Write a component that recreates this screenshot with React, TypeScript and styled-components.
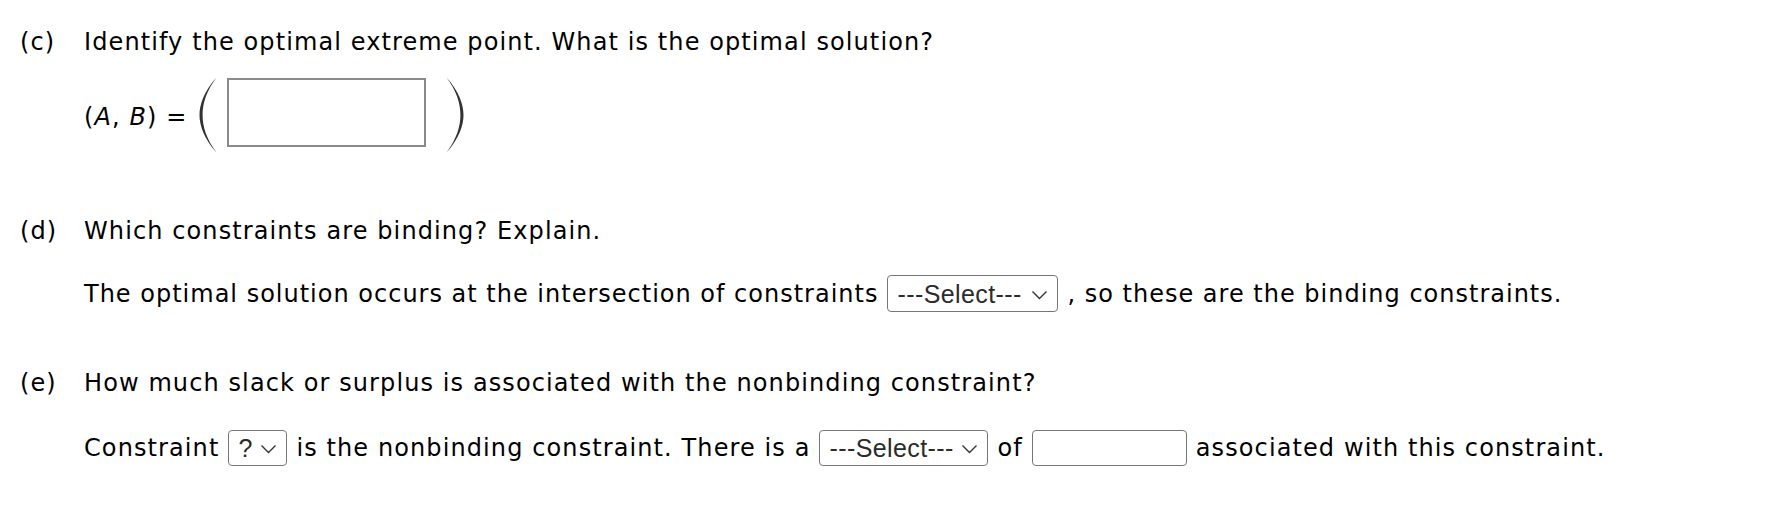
import React from 'react';
import styled, { createGlobalStyle } from 'styled-components';

const GlobalStyle = createGlobalStyle`
    html, body {
        margin: 0;
        padding: 0;
        background: #fff;
    }
    body {
        font-family: Verdana, "DejaVu Sans", sans-serif;
        font-size: 24px;
        letter-spacing: 1.1px;
        color: #000;
    }
`;

const Page = styled.div`
    padding: 27px 0 0 20px;
    display: flex;
    flex-direction: column;
`;

const Part = styled.div<{ $gap: number }>`
    display: flex;
    margin-top: ${(p) => p.$gap}px;
`;

const PartLabel = styled.div`
    width: 64px;
    flex-shrink: 0;
    line-height: 30px;
`;

const PartBody = styled.div`
    display: flex;
    flex-direction: column;
`;

const Question = styled.div`
    line-height: 30px;
    white-space: nowrap;
`;

const AnswerRow = styled.div<{ $gap: number; $spacing?: number }>`
    display: flex;
    align-items: center;
    gap: 9px;
    margin-top: ${(p) => p.$gap}px;
    white-space: nowrap;
    letter-spacing: ${(p) => p.$spacing ?? 1.1}px;
`;

const MathRow = styled.div`
    display: flex;
    align-items: center;
    margin-top: 20px;
    white-space: nowrap;
`;

const MathLabel = styled.span`
    margin-top: 4px;
    i {
        font-style: italic;
    }
`;

const Paren = styled.svg<{ $left: number }>`
    width: 18px;
    height: 76px;
    margin-left: ${(p) => p.$left}px;
    flex-shrink: 0;
`;

const BigInput = styled.input`
    box-sizing: border-box;
    width: 199px;
    height: 69px;
    margin-left: 10px;
    margin-top: -5px;
    border: 2px solid #8a8a8a;
    border-radius: 0;
    background: #fff;
    padding: 0 8px;
    font: inherit;
`;

const SmallInput = styled.input`
    box-sizing: border-box;
    width: 155px;
    height: 36px;
    border: 1px solid #767676;
    border-radius: 4px;
    background: #fff;
    padding: 0 8px;
    font: inherit;
`;

const SelectWrap = styled.span<{ $width: number; $height: number }>`
    position: relative;
    display: inline-flex;
    width: ${(p) => p.$width}px;
    height: ${(p) => p.$height}px;
    flex-shrink: 0;
`;

const NativeSelect = styled.select`
    appearance: none;
    -webkit-appearance: none;
    box-sizing: border-box;
    width: 100%;
    height: 100%;
    margin: 0;
    border: 1px solid #767676;
    border-radius: 4px;
    background: #fff;
    padding: 0 0 0 9px;
    font-family: "Liberation Sans", Arial, sans-serif;
    font-size: 25px;
    letter-spacing: 0.4px;
    color: #2b2b2b;
`;

const Chevron = styled.svg`
    position: absolute;
    right: 10px;
    top: 50%;
    width: 17px;
    height: 10px;
    margin-top: -4px;
    pointer-events: none;
`;

const Dropdown: React.FC<{ width: number; height: number; label: string }> = ({ width, height, label }) => (
    <SelectWrap $width={width} $height={height}>
        <NativeSelect defaultValue="">
            <option value="">{label}</option>
        </NativeSelect>
        <Chevron viewBox="0 0 17 10">
            <path d="M1.5 1.5 L8.5 8.5 L15.5 1.5" fill="none" stroke="#333" strokeWidth="1.4" />
        </Chevron>
    </SelectWrap>
);

const LeftParen = () => (
    <Paren $left={12} viewBox="0 0 18 76">
        <path d="M17.5 0.5 C5 14, 0.5 28, 0.5 38 C0.5 48, 5 62, 17.5 75.5 C7.5 62, 3.6 50, 3.6 38 C3.6 26, 7.5 14, 17.5 0.5 Z" fill="#333" />
    </Paren>
);

const RightParen = () => (
    <Paren $left={20} viewBox="0 0 18 76">
        <path d="M0.5 0.5 C13 14, 17.5 28, 17.5 38 C17.5 48, 13 62, 0.5 75.5 C10.5 62, 14.4 50, 14.4 38 C14.4 26, 10.5 14, 0.5 0.5 Z" fill="#333" />
    </Paren>
);

export default function App() {
    return (
        <>
            <GlobalStyle />
            <Page>
                <Part $gap={0}>
                    <PartLabel>(c)</PartLabel>
                    <PartBody>
                        <Question>Identify the optimal extreme point. What is the optimal solution?</Question>
                        <MathRow>
                            <MathLabel>
                                (<i>A</i>, <i>B</i>) =
                            </MathLabel>
                            <LeftParen />
                            <BigInput type="text" />
                            <RightParen />
                        </MathRow>
                    </PartBody>
                </Part>

                <Part $gap={63}>
                    <PartLabel>(d)</PartLabel>
                    <PartBody>
                        <Question>Which constraints are binding? Explain.</Question>
                        <AnswerRow $gap={29} $spacing={1.0}>
                            <span>The optimal solution occurs at the intersection of constraints</span>
                            <Dropdown width={171} height={37} label="---Select---" />
                            <span>, so these are the binding constraints.</span>
                        </AnswerRow>
                    </PartBody>
                </Part>

                <Part $gap={56}>
                    <PartLabel>(e)</PartLabel>
                    <PartBody>
                        <Question>How much slack or surplus is associated with the nonbinding constraint?</Question>
                        <AnswerRow $gap={32}>
                            <span>Constraint</span>
                            <Dropdown width={59} height={36} label="?" />
                            <span>is the nonbinding constraint. There is a</span>
                            <Dropdown width={169} height={36} label="---Select---" />
                            <span>of</span>
                            <SmallInput type="text" />
                            <span>associated with this constraint.</span>
                        </AnswerRow>
                    </PartBody>
                </Part>
            </Page>
        </>
    );
}
